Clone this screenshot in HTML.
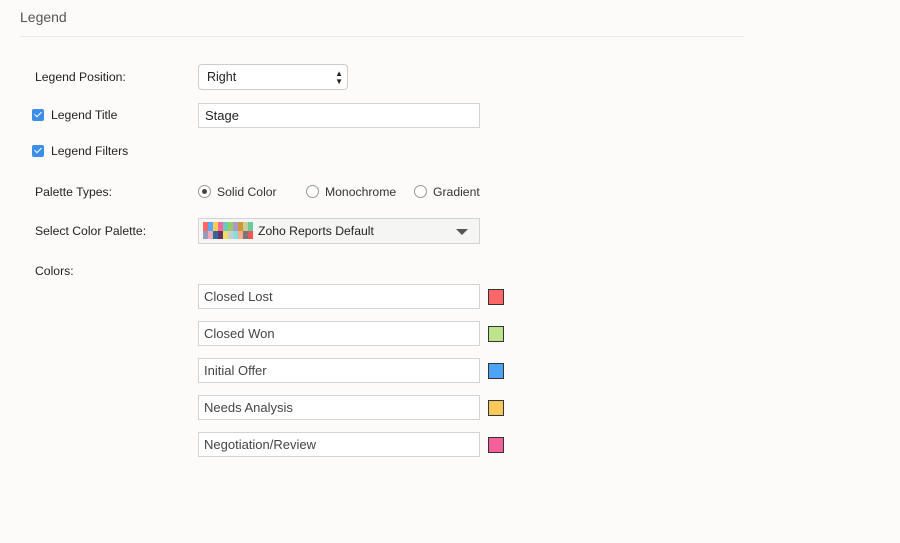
<!DOCTYPE html>
<html><head><style>
body{margin:0;width:900px;height:543px;background:#fcfbf9;font-family:"Liberation Sans",sans-serif;position:relative;overflow:hidden;color:#222}
.a{position:absolute}
.lbl{font-size:12.2px;color:#222}
.h{left:20px;top:9px;font-size:14px;color:#555}
.line{left:20px;top:36px;width:724px;height:1px;background:#e9e9e9}
.inp{left:198px;border:1px solid #d3d3d3;background:#fff;font-size:13px;color:#444;line-height:23px;padding-left:5px;box-sizing:border-box;width:282px;height:25px}
.cb{width:12px;height:12px;background:#3b8fe8;border-radius:2px}
.cb:after{content:"";position:absolute;left:4px;top:1px;width:3px;height:6px;border:solid #fff;border-width:0 1.5px 1.5px 0;transform:rotate(45deg)}
.rd{width:11px;height:11px;border:1px solid #999;border-radius:50%;background:#fff}
.sw{left:488px;width:14px;height:14px;border:1px solid #333}
</style></head><body>
<div class="a h">Legend</div>
<div class="a line"></div>
<div class="a lbl" style="left:35px;top:70px">Legend Position:</div>
<div class="a" style="left:198px;top:64px;width:150px;height:26px;border:1px solid #ccc;border-radius:4px;background:#fff;box-sizing:border-box;font-size:12.5px;line-height:25px;padding-left:8px">Right<span class="a" style="right:4px;font-size:8px;line-height:8px;top:5px">▲<br>▼</span></div>
<div class="a cb" style="left:32px;top:109px"></div>
<div class="a lbl" style="left:51px;top:108px">Legend Title</div>
<div class="a inp" style="top:103px;color:#222;padding-left:6px">Stage</div>
<div class="a cb" style="left:32px;top:145px"></div>
<div class="a lbl" style="left:51px;top:144px">Legend Filters</div>
<div class="a lbl" style="left:35px;top:185px">Palette Types:</div>
<div class="a rd" style="left:198px;top:185px"><div class="a" style="left:3px;top:3px;width:5px;height:5px;border-radius:50%;background:#444"></div></div>
<div class="a lbl" style="left:217px;top:185px;color:#333">Solid Color</div>
<div class="a rd" style="left:306px;top:185px"></div>
<div class="a lbl" style="left:325px;top:185px;color:#333">Monochrome</div>
<div class="a rd" style="left:414px;top:185px"></div>
<div class="a lbl" style="left:433px;top:185px;color:#333">Gradient</div>
<div class="a lbl" style="left:35px;top:224px">Select Color Palette:</div>
<div class="a" style="left:198px;top:218px;width:282px;height:26px;border:1px solid #d3d3d3;background:#f5f5f4;box-sizing:border-box"></div>
<svg class="a" style="left:203px;top:222px" width="50" height="17">
<g>
<rect x="0" y="0" width="5" height="9" fill="#f66"/><rect x="5" y="0" width="5" height="9" fill="#5af"/><rect x="10" y="0" width="5" height="9" fill="#fc5"/><rect x="15" y="0" width="5" height="9" fill="#f69"/><rect x="20" y="0" width="5" height="9" fill="#6cb"/><rect x="25" y="0" width="5" height="9" fill="#9c6"/><rect x="30" y="0" width="5" height="9" fill="#a9c"/><rect x="35" y="0" width="5" height="9" fill="#c93"/><rect x="40" y="0" width="5" height="9" fill="#cc9"/><rect x="45" y="0" width="5" height="9" fill="#6c9"/>
<rect x="0" y="9" width="5" height="8" fill="#99b"/><rect x="5" y="9" width="5" height="8" fill="#eab"/><rect x="10" y="9" width="5" height="8" fill="#369"/><rect x="15" y="9" width="5" height="8" fill="#636"/><rect x="20" y="9" width="5" height="8" fill="#ed6"/><rect x="25" y="9" width="5" height="8" fill="#ccc"/><rect x="30" y="9" width="5" height="8" fill="#8dd"/><rect x="35" y="9" width="5" height="8" fill="#fa8"/><rect x="40" y="9" width="5" height="8" fill="#777"/><rect x="45" y="9" width="5" height="8" fill="#e55"/>
</g></svg>
<div class="a lbl" style="left:258px;top:224px;color:#222">Zoho Reports Default</div>
<div class="a" style="left:456px;top:229px;width:0;height:0;border-left:6px solid transparent;border-right:6px solid transparent;border-top:6px solid #555"></div>
<div class="a lbl" style="left:35px;top:264px">Colors:</div>
<div class="a inp" style="top:284px">Closed Lost</div><div class="a sw" style="top:289px;background:#f66"></div>
<div class="a inp" style="top:321px">Closed Won</div><div class="a sw" style="top:326px;background:#bde38c"></div>
<div class="a inp" style="top:358px">Initial Offer</div><div class="a sw" style="top:363px;background:#4da3f7"></div>
<div class="a inp" style="top:395px">Needs Analysis</div><div class="a sw" style="top:400px;background:#fdc95a"></div>
<div class="a inp" style="top:432px">Negotiation/Review</div><div class="a sw" style="top:437px;background:#f46099"></div>
</body></html>
